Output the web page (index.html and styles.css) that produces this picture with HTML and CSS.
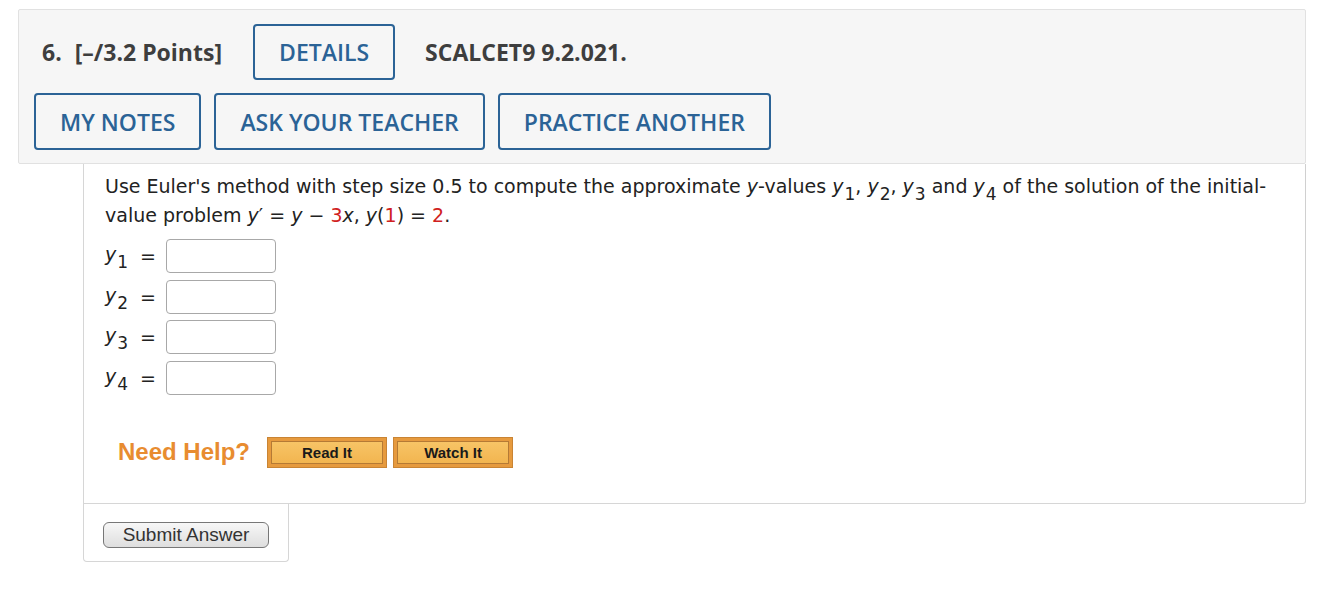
FILE: index.html
```html
<!DOCTYPE html>
<html>
<head>
<meta charset="utf-8">
<link rel="stylesheet" href="styles.css">
</head>
<body>
<div class="question">
  <div class="qhead">
    <div class="qrow1">
      <span class="qnum">6.</span>
      <span class="qpts">[–/3.2 Points]</span>
      <button class="obtn details">DETAILS</button>
      <span class="qcode">SCALCET9 9.2.021.</span>
    </div>
    <div class="qrow2">
      <button class="obtn">MY NOTES</button>
      <button class="obtn">ASK YOUR TEACHER</button>
      <button class="obtn">PRACTICE ANOTHER</button>
    </div>
  </div>
  <div class="qbody">
    <p class="prompt">Use Euler's method with step size 0.5 to compute the approximate <i>y</i>-values <i>y</i><sub>1</sub>, <i>y</i><sub>2</sub>, <i>y</i><sub>3</sub> and <i>y</i><sub>4</sub> of the solution of the initial-value problem <i>y</i>′ = <i>y</i> − <span class="red">3</span><i>x</i>, <i>y</i>(<span class="red">1</span>) = <span class="red">2</span>.</p>
    <div class="answers">
      <div class="arow"><span class="lbl"><i>y</i><sub>1</sub></span><span class="eq">=</span><span class="inp"></span></div>
      <div class="arow"><span class="lbl"><i>y</i><sub>2</sub></span><span class="eq">=</span><span class="inp"></span></div>
      <div class="arow"><span class="lbl"><i>y</i><sub>3</sub></span><span class="eq">=</span><span class="inp"></span></div>
      <div class="arow"><span class="lbl"><i>y</i><sub>4</sub></span><span class="eq">=</span><span class="inp"></span></div>
    </div>
    <div class="help">
      <span class="needhelp">Need Help?</span>
      <span class="hbtn"><span class="hin">Read It</span></span>
      <span class="hbtn"><span class="hin">Watch It</span></span>
    </div>
  </div>
  <div class="submitbox">
    <button class="submit">Submit Answer</button>
  </div>
</div>
</body>
</html>
```
FILE: styles.css
```css
html, body { margin: 0; padding: 0; background: #fff; }
body { padding: 9px 24px 0 18px; }

.question { width: 1288px; }

.qhead {
  background: #f6f6f6;
  border: 1px solid #e1e1e1;
  border-radius: 2px;
  padding: 14px 0 13px 15px;
  font-family: "Open Sans", sans-serif;
}
.qrow1 { display: flex; align-items: center; height: 56px; }
.qnum, .qpts, .qcode { font-weight: 700; font-size: 23px; color: #3e3e3e; }
.qnum { margin-left: 8px; }
.qpts { margin-left: 13px; }
.qcode { margin-left: 30px; }
.details { margin-left: 31px; }
.qrow2 { display: flex; gap: 13px; margin-top: 13px; }

.obtn {
  font-family: "Open Sans", sans-serif;
  font-size: 23px;
  font-weight: 600;
  color: #2b6396;
  background: transparent;
  border: 2px solid #2b6396;
  border-radius: 4px;
  height: 57px;
  padding: 0 24px;
}
.details { height: 56px; }

.qbody {
  margin-left: 65px;
  border-left: 1px solid #d6d6d6;
  border-right: 1px solid #d0d0d0;
  border-bottom: 1px solid #d6d6d6;
  border-bottom-right-radius: 3px;
  height: 340px;
  box-sizing: border-box;
  padding: 0 22px 0 21px;
  font-family: "DejaVu Sans", sans-serif;
  font-size: 19px;
  color: #222;
}
.prompt { margin: 0; padding-top: 8px; line-height: 29px; }
.red { color: #d02020; }
sub { font-size: 17px; vertical-align: -7px; line-height: 0; margin-left: 1px; }
i { font-style: italic; }

.answers { margin-top: 9px; display: flex; flex-direction: column; gap: 6.5px; }
.arow { display: flex; align-items: center; height: 34px; }
.lbl { width: 35px; position: relative; top: -2px; }
.eq { width: 26px; }
.inp {
  width: 108px; height: 32px;
  border: 1px solid #a8a8a8;
  border-radius: 4px;
  background: #fff;
}

.help { display: flex; align-items: center; margin-top: 42px; margin-left: 13px; }
.needhelp {
  font-family: "Liberation Sans", Arial, sans-serif;
  font-weight: 700; font-size: 24px;
  color: #e88c30;
  margin-right: 17px;
}
.hbtn {
  display: inline-flex;
  background: #e69a3e;
  border: 1px solid #c98434;
  padding: 3px;
  margin-right: 6px;
}
.hin {
  display: inline-block;
  width: 110px; height: 21px;
  background: linear-gradient(#f7c466, #f2b550);
  border: 1px solid #b57a35;
  text-align: center;
  font-family: "Liberation Sans", Arial, sans-serif;
  font-weight: 700; font-size: 15px; line-height: 21px;
  color: #1a1a1a;
}

.submitbox {
  margin-left: 65px;
  width: 206px;
  height: 58px;
  border-left: 1px solid #d6d6d6;
  border-right: 1px solid #d6d6d6;
  border-bottom: 1px solid #d6d6d6;
  border-bottom-left-radius: 4px;
  border-bottom-right-radius: 4px;
  padding: 18px 0 0 19px;
  box-sizing: border-box;
}
.submit {
  font-family: "Liberation Sans", Arial, sans-serif;
  font-size: 19px;
  color: #333;
  width: 166px; height: 26px;
  padding: 0;
  border: 1px solid #777;
  border-radius: 6px;
  background: linear-gradient(#f7f7f7, #dedede);
}
```
